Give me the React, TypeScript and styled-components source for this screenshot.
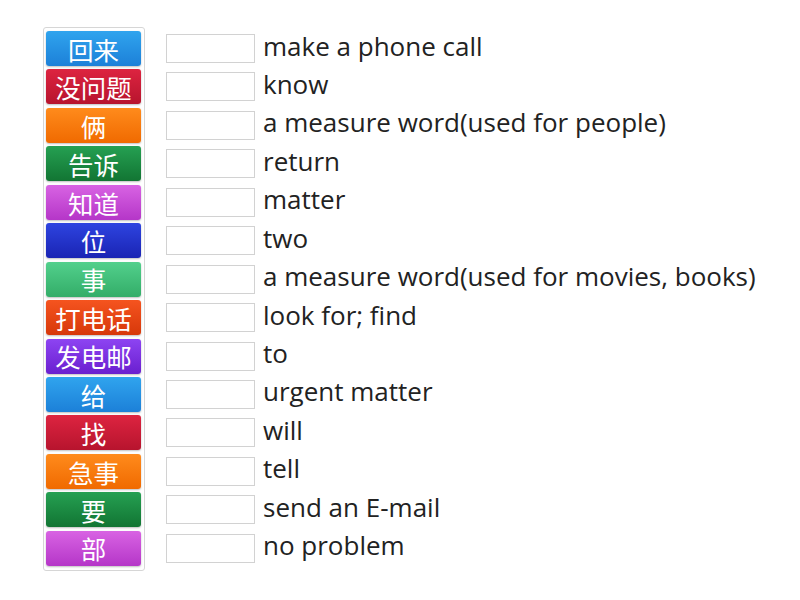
import styled, { createGlobalStyle } from "styled-components";

const GlobalStyle = createGlobalStyle`
  body {
    margin: 0;
    background: #fff;
    font-family: "Open Sans", "Noto Sans CJK SC", sans-serif;
  }
`;

const Page = styled.div`
  display: flex;
  align-items: flex-start;
  padding: 27px 0 0 43px;
`;

const TileBox = styled.div`
  display: flex;
  flex-direction: column;
  gap: 3.45px;
  padding: 3px 3px 4px 2px;
  border: 1px solid #d6d6d6;
  border-radius: 3px;
`;

const palette: Record<string, [string, string]> = {
  blue: ["#30a4ee", "#1c80d8"],
  red: ["#dd2440", "#b7142e"],
  orange: ["#ff8b1c", "#f06a00"],
  green: ["#25a052", "#127533"],
  pink: ["#d863e3", "#b536c8"],
  navy: ["#2e44e0", "#1a24b4"],
  mint: ["#52d08c", "#33ad68"],
  flame: ["#f5541f", "#d7380a"],
  violet: ["#8d44f2", "#6a1fcf"],
};

const Tile = styled.div<{ $color: string }>`
  width: 95px;
  height: 35px;
  border-radius: 3px;
  display: flex;
  align-items: center;
  justify-content: center;
  color: #fff;
  font-family: "Noto Sans CJK SC", sans-serif;
  font-size: 25.5px;
  line-height: 1;
  background: linear-gradient(
    to bottom,
    ${p => palette[p.$color][0]},
    ${p => palette[p.$color][1]}
  );
  box-shadow: 0 1px 2px rgba(0, 0, 0, 0.25);
`;

const Answers = styled.div`
  display: flex;
  flex-direction: column;
  gap: 3.45px;
  margin: 4px 0 0 21px;
`;

const Row = styled.div`
  display: flex;
  align-items: center;
  height: 35px;
`;

const Slot = styled.div`
  width: 87px;
  height: 27px;
  border: 1px solid #d2d2d2;
  background: #fff;
  margin-right: 8px;
`;

const Label = styled.span`
  font-family: "Open Sans", sans-serif;
  font-size: 26px;
  color: #222;
  white-space: nowrap;
  position: relative;
  top: -3px;
`;

const tiles: [string, string][] = [
  ["回来", "blue"],
  ["没问题", "red"],
  ["俩", "orange"],
  ["告诉", "green"],
  ["知道", "pink"],
  ["位", "navy"],
  ["事", "mint"],
  ["打电话", "flame"],
  ["发电邮", "violet"],
  ["给", "blue"],
  ["找", "red"],
  ["急事", "orange"],
  ["要", "green"],
  ["部", "pink"],
];

const meanings = [
  "make a phone call",
  "know",
  "a measure word(used for people)",
  "return",
  "matter",
  "two",
  "a measure word(used for movies, books)",
  "look for; find",
  "to",
  "urgent matter",
  "will",
  "tell",
  "send an E-mail",
  "no problem",
];

function App() {
  return (
    <>
      <GlobalStyle />
      <Page>
        <TileBox>
          {tiles.map(([word, color]) => (
            <Tile key={word} $color={color}>{word}</Tile>
          ))}
        </TileBox>
        <Answers>
          {meanings.map(m => (
            <Row key={m}>
              <Slot />
              <Label>{m}</Label>
            </Row>
          ))}
        </Answers>
      </Page>
    </>
  );
}

export default App;
